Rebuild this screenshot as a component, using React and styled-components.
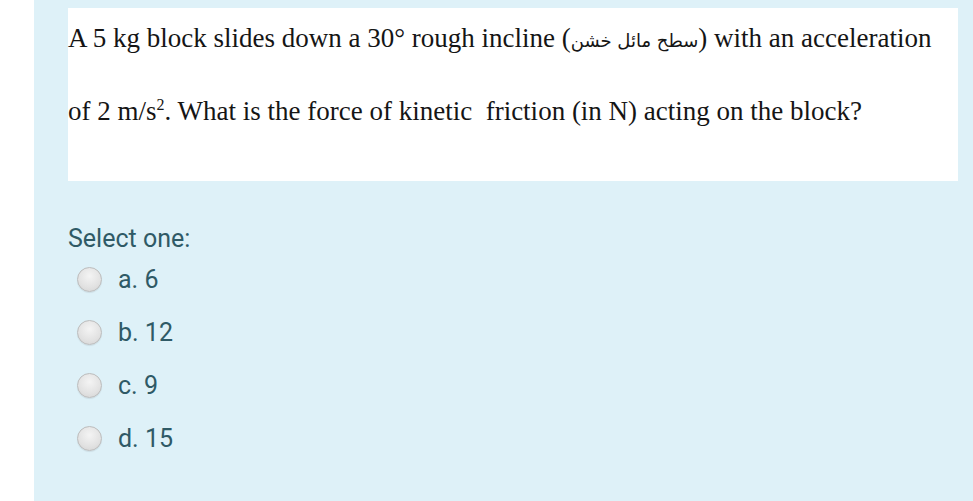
import styled, { createGlobalStyle } from 'styled-components';

const GlobalStyle = createGlobalStyle`
  html, body {
    margin: 0;
    padding: 0;
    background: #ffffff;
  }
`;

const Page = styled.div`
  width: 973px;
  height: 501px;
  padding-left: 34px;
  box-sizing: border-box;
  overflow: hidden;
`;

const Panel = styled.section`
  height: 100%;
  background-color: #def1f8;
  padding: 8px 15px 0 34px;
  box-sizing: border-box;
`;

const QuestionBox = styled.div`
  background-color: #ffffff;
  height: 173px;
  box-sizing: border-box;
`;

const QuestionText = styled.p`
  margin: 0;
  position: relative;
  top: -5px;
  font-family: "Liberation Serif", "Times New Roman", serif;
  font-size: 27px;
  line-height: 71px;
  color: #151515;
  white-space: nowrap;

  sup {
    font-size: 16px;
    line-height: 0;
    vertical-align: 10px;
  }
`;

const Arabic = styled.span`
  font-family: "DejaVu Sans", "Noto Sans", sans-serif;
  font-size: 18px;
`;

const Answers = styled.div`
  padding-top: 43px;
  font-family: Roboto, "Noto Sans", sans-serif;
  color: #2f5a66;
`;

const Prompt = styled.div`
  font-size: 25px;
  line-height: 30px;
  margin-bottom: 10px;
`;

const OptionList = styled.div`
  display: flex;
  flex-direction: column;
  gap: 23px;
  padding-left: 9px;
`;

const Option = styled.label`
  display: flex;
  align-items: center;
  gap: 16px;
  height: 30px;
  font-size: 25px;
`;

const Radio = styled.span`
  width: 23px;
  height: 23px;
  border-radius: 50%;
  border: 1px solid #bcbcbc;
  background: radial-gradient(circle at 50% 35%, #f4f4f4 0%, #e2e2e2 60%, #d2d2d2 100%);
  box-shadow: 0 1px 1px rgba(0, 0, 0, 0.08);
  flex-shrink: 0;
`;

const options = ['a. 6', 'b. 12', 'c. 9', 'd. 15'];

const App = () => (
  <Page>
    <GlobalStyle />
    <Panel>
      <QuestionBox>
        <QuestionText>
          A 5 kg block slides down a 30° rough incline (<Arabic dir="rtl">سطح مائل خشن</Arabic>) with an acceleration
          <br />
          of 2 m/s<sup>2</sup>. What is the force of kinetic&nbsp; friction (in N) acting on the block?
        </QuestionText>
      </QuestionBox>
      <Answers>
        <Prompt>Select one:</Prompt>
        <OptionList>
          {options.map((o) => (
            <Option key={o}>
              <Radio />
              {o}
            </Option>
          ))}
        </OptionList>
      </Answers>
    </Panel>
  </Page>
);

export default App;
